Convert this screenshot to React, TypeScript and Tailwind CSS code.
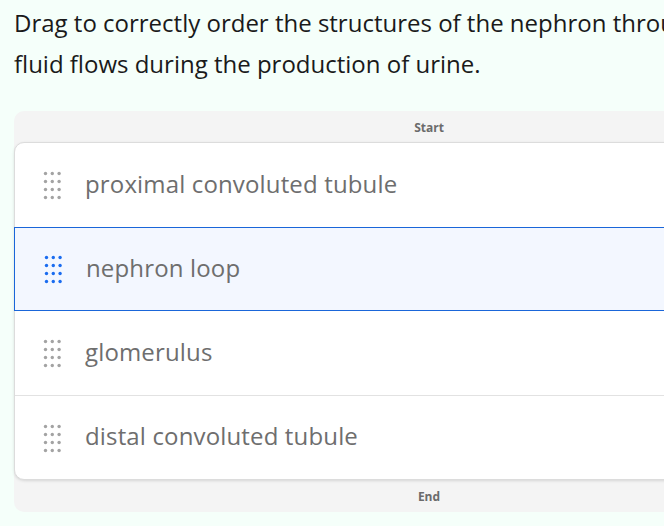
import React from 'react';

const items = [
  { id: 'pct', label: 'proximal convoluted tubule' },
  { id: 'loop', label: 'nephron loop', active: true },
  { id: 'glom', label: 'glomerulus' },
  { id: 'dct', label: 'distal convoluted tubule' },
];

const Grip = ({ active }: { active?: boolean }) => (
  <svg width="20" height="30" viewBox="0 0 20 30" className="shrink-0">
    {[0, 1, 2, 3].map(r =>
      [0, 1, 2].map(c => (
        <circle
          key={`${r}-${c}`}
          cx={2.5 + c * 6.8}
          cy={3.5 + r * 8}
          r={1.7}
          fill={active ? '#1a6cf0' : '#a3a3a3'}
        />
      ))
    )}
  </svg>
);

export default function App() {
  return (
    <div
      className="min-h-screen w-full overflow-hidden bg-[#f5fffa] pl-[14px] pt-[2px]"
      style={{ fontFamily: '"Open Sans", "Liberation Sans", sans-serif' }}
    >
      <p className="w-[795px] text-[24px] leading-[41px] text-[#1a1a1a]">
        Drag to correctly order the structures of the nephron through which fluid flows during the production of urine.
      </p>

      <div className="mt-[27px] w-[830px] rounded-[10px] bg-[#f4f4f4]">
        <div className="flex h-[31px] items-center justify-center pt-[2px] text-[12px] font-bold text-[#6b6b6b]">
          Start
        </div>
        <ul className="rounded-[10px] border border-[#dcdcdc] bg-white shadow-[0_1px_3px_rgba(0,0,0,0.12)]">
          {items.map((item, i) => (
            <li
              key={item.id}
              className={`flex h-[84px] items-center gap-[22px] pl-[28px] text-[24px] tracking-[0.15px] text-[#6e6e6e] ${
                item.active
                  ? '-mx-px border border-[#1a66d9] bg-[#f3f7ff] pl-[29px]'
                  : i > 0 && !items[i - 1].active
                  ? 'border-t border-[#e2e2e2]'
                  : ''
              }`}
            >
              <Grip active={item.active} />
              <span className="-mt-[3px]">{item.label}</span>
            </li>
          ))}
        </ul>
        <div className="flex h-[32px] items-center justify-center pt-[2px] text-[12px] font-bold text-[#6b6b6b]">
          End
        </div>
      </div>
    </div>
  );
}
